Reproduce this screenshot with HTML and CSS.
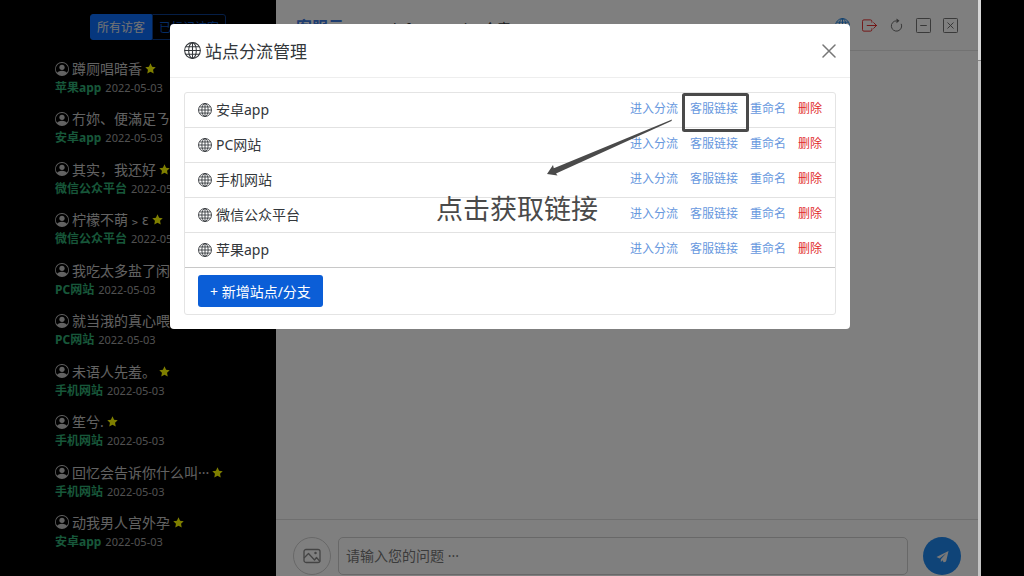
FILE: index.html
```html
<!DOCTYPE html>
<html lang="zh-CN">
<head>
    <meta charset="UTF-8">
    <meta name="viewport" content="width=device-width, initial-scale=1.0">
    <title>客服云</title>
    <link rel="stylesheet" href="styles.css">
</head>
<body>
    <svg class="sprite" aria-hidden="true">
        <symbol id="globe" viewBox="0 0 16 16">
            <g fill="none" stroke="currentColor">
                <circle cx="8" cy="8" r="7.4"/>
                <ellipse cx="8" cy="8" rx="3.6" ry="7.4"/>
                <path d="M8 .6v14.8M.6 8h14.8M1.7 4.5h12.6M1.7 11.5h12.6"/>
            </g>
        </symbol>
        <symbol id="person" viewBox="0 0 16 16">
            <path fill="currentColor" d="M11 6a3 3 0 1 1-6 0 3 3 0 0 1 6 0z"/>
            <path fill="currentColor" fill-rule="evenodd" d="M0 8a8 8 0 1 1 16 0A8 8 0 0 1 0 8zm8-7a7 7 0 0 0-5.468 11.37C3.242 11.226 4.805 10 8 10s4.757 1.225 5.468 2.37A7 7 0 0 0 8 1z"/>
        </symbol>
        <symbol id="star" viewBox="0 0 16 16">
            <path fill="currentColor" d="M8 .5l2.3 4.9 5.3.7-3.9 3.7 1 5.4L8 12.6l-4.7 2.6 1-5.4L.4 6.1l5.3-.7z"/>
        </symbol>
    </svg>

    <div class="page">
        <div class="window">
            <aside class="sidebar">
                <div class="tabs">
                    <button class="tab active">所有访客</button>
                    <button class="tab">已标记访客</button>
                </div>
                <ul class="visitors">
                    <li>
                        <div class="name"><svg class="avatar"><use href="#person"/></svg>蹲厕唱暗香<svg class="star"><use href="#star"/></svg></div>
                        <div class="from"><b>苹果app</b><span>2022-05-03</span></div>
                    </li>
                    <li>
                        <div class="name"><svg class="avatar"><use href="#person"/></svg>冇妳、便滿足ㄋ</div>
                        <div class="from"><b>安卓app</b><span>2022-05-03</span></div>
                    </li>
                    <li>
                        <div class="name"><svg class="avatar"><use href="#person"/></svg>其实，我还好<svg class="star"><use href="#star"/></svg></div>
                        <div class="from"><b>微信公众平台</b><span>2022-05-03</span></div>
                    </li>
                    <li>
                        <div class="name"><svg class="avatar"><use href="#person"/></svg>柠檬不萌﹥ε<svg class="star"><use href="#star"/></svg></div>
                        <div class="from"><b>微信公众平台</b><span>2022-05-03</span></div>
                    </li>
                    <li>
                        <div class="name"><svg class="avatar"><use href="#person"/></svg>我吃太多盐了闲的</div>
                        <div class="from"><b>PC网站</b><span>2022-05-03</span></div>
                    </li>
                    <li>
                        <div class="name"><svg class="avatar"><use href="#person"/></svg>就当涐的真心喂了</div>
                        <div class="from"><b>PC网站</b><span>2022-05-03</span></div>
                    </li>
                    <li>
                        <div class="name"><svg class="avatar"><use href="#person"/></svg>未语人先羞。<svg class="star"><use href="#star"/></svg></div>
                        <div class="from"><b>手机网站</b><span>2022-05-03</span></div>
                    </li>
                    <li>
                        <div class="name"><svg class="avatar"><use href="#person"/></svg>笙兮.<svg class="star"><use href="#star"/></svg></div>
                        <div class="from"><b>手机网站</b><span>2022-05-03</span></div>
                    </li>
                    <li>
                        <div class="name"><svg class="avatar"><use href="#person"/></svg>回忆会告诉你什么叫···<svg class="star"><use href="#star"/></svg></div>
                        <div class="from"><b>手机网站</b><span>2022-05-03</span></div>
                    </li>
                    <li>
                        <div class="name"><svg class="avatar"><use href="#person"/></svg>动我男人宫外孕<svg class="star"><use href="#star"/></svg></div>
                        <div class="from"><b>安卓app</b><span>2022-05-03</span></div>
                    </li>
                </ul>
            </aside>

            <main class="chat">
                <header class="topbar">
                    <strong class="brand">客服云</strong>
                    <span class="account">web for security 企章</span>
                    <div class="tools">
                        <button class="tool blue" aria-label="站点"><svg><use href="#globe"/></svg></button>
                        <button class="tool red" aria-label="退出">
                            <svg viewBox="0 0 16 16" fill="none" stroke="currentColor" stroke-linecap="round" stroke-linejoin="round"><path d="M10.5 4.500V3.500a1.500 1.500 0 0 0-1.500-1.500H2A1.500 1.500 0 0 0 .5 3.500v9A1.500 1.500 0 0 0 2 14h7a1.500 1.500 0 0 0 1.500-1.500v-1M5.500 8h10M12.500 5l3 3-3 3"/></svg>
                        </button>
                        <button class="tool" aria-label="刷新">
                            <svg viewBox="0 0 16 16"><path fill="none" stroke="currentColor" d="M8 3a5.500 5.500 0 1 0 5 3.200"/><path fill="currentColor" d="M8 .5v5l3.200-2.500z"/></svg>
                        </button>
                        <button class="tool" aria-label="最小化">
                            <svg viewBox="0 0 16 16" fill="none" stroke="currentColor"><rect x=".5" y=".5" width="15" height="15" rx="1"/><path d="M4.500 8h7"/></svg>
                        </button>
                        <button class="tool" aria-label="关闭窗口">
                            <svg viewBox="0 0 16 16" fill="none" stroke="currentColor"><rect x=".5" y=".5" width="15" height="15" rx="1"/><path d="M4.800 4.800l6.400 6.400M11.200 4.800l-6.400 6.400"/></svg>
                        </button>
                    </div>
                </header>
                <div class="messages"></div>
                <footer class="composer">
                    <button class="round" aria-label="图片">
                        <svg viewBox="0 0 18 16" fill="none" stroke="currentColor" stroke-width="1.3" stroke-linejoin="round"><rect x="1" y="1.500" width="16" height="13" rx="2"/><path d="M1 10l4.500-4.500 6 6.500 2-2.500 3.500 4"/><circle cx="12.500" cy="5" r=".6"/></svg>
                    </button>
                    <input class="message" type="text" aria-label="消息" placeholder="请输入您的问题 ···">
                    <button class="round send" aria-label="发送">
                        <svg viewBox="0 0 14 14" fill="currentColor"><path d="M13.500 1L.5 7.500l3.300 1.700L11 3.500 5.200 9.900v3.100l2-2 .9 2.300 1.900-.3 1-1.200z"/></svg>
                    </button>
                </footer>
            </main>

            <div class="overlay">
                <section class="modal" role="dialog" aria-labelledby="modal-title">
                    <div class="modal-header">
                        <svg class="title-icon"><use href="#globe"/></svg>
                        <h1 id="modal-title">站点分流管理</h1>
                        <button class="close" aria-label="关闭">
                            <svg viewBox="0 0 14 14" fill="none" stroke="currentColor" stroke-width="1.500" stroke-linecap="round"><path d="M1 1l12 12M13 1L1 13"/></svg>
                        </button>
                    </div>
                    <div class="modal-body">
                        <div class="card">
                            <table class="sites">
                                <tr>
                                    <td><div class="site"><svg><use href="#globe"/></svg>安卓app</div></td>
                                    <td class="links"><a href="#">进入分流</a><a href="#">客服链接</a><a href="#">重命名</a><a href="#" class="delete">删除</a></td>
                                </tr>
                                <tr>
                                    <td><div class="site"><svg><use href="#globe"/></svg>PC网站</div></td>
                                    <td class="links"><a href="#">进入分流</a><a href="#">客服链接</a><a href="#">重命名</a><a href="#" class="delete">删除</a></td>
                                </tr>
                                <tr>
                                    <td><div class="site"><svg><use href="#globe"/></svg>手机网站</div></td>
                                    <td class="links"><a href="#">进入分流</a><a href="#">客服链接</a><a href="#">重命名</a><a href="#" class="delete">删除</a></td>
                                </tr>
                                <tr>
                                    <td><div class="site"><svg><use href="#globe"/></svg>微信公众平台</div></td>
                                    <td class="links"><a href="#">进入分流</a><a href="#">客服链接</a><a href="#">重命名</a><a href="#" class="delete">删除</a></td>
                                </tr>
                                <tr>
                                    <td><div class="site"><svg><use href="#globe"/></svg>苹果app</div></td>
                                    <td class="links"><a href="#">进入分流</a><a href="#">客服链接</a><a href="#">重命名</a><a href="#" class="delete">删除</a></td>
                                </tr>
                            </table>
                            <div class="card-footer">
                                <button class="add">+ 新增站点/分支</button>
                            </div>
                        </div>
                    </div>
                    <!-- hint drawn over the table -->
                    <svg class="hint-arrow" viewBox="0 0 240 90">
                        <rect x="143.500" y="4.500" width="64" height="36" rx="1" fill="none" stroke="#4a4a4a" stroke-width="3"/>
                        <path fill="#4a4a4a" d="M132 29.500L131.500 31 16 83.500l1.500 2-10.500-1.500 6-9 .8 3.200z"/>
                    </svg>
                    <div class="hint">点击获取链接</div>
                </section>
            </div>
        </div>
        <div class="scrollbar"></div>
        <div class="gutter"></div>
    </div>
</body>
</html>
```
FILE: styles.css
```css
* {
    box-sizing: border-box;
}
body {
    margin: 0;
    background-color: #000;
    font-family: "Noto Sans", "Noto Sans CJK SC", sans-serif;
    font-size: 14px;
    color: #33373b;
}
button, input {
    font-family: inherit;
    margin: 0;
}
svg {
    display: block;
    flex-shrink: 0;
}
.sprite {
    position: absolute;
    width: 0;
    height: 0;
}
.page {
    display: flex;
    height: 100vh;
    overflow: hidden;
}
.window {
    position: relative;
    flex: 1;
    display: flex;
    min-width: 0;
}
.scrollbar {
    width: 3px;
    background: linear-gradient(#d8d8d8 0 60px, #888 60px 61px, #c4c4c4 61px);
}
.gutter {
    width: 43px;
    background-color: #000;
}

/* visitors */
.sidebar {
    width: 276px;
    padding: 14px 40px 26px 55px;
    background-color: #000;
    display: flex;
    flex-direction: column;
    gap: 18px;
}
.tabs {
    display: flex;
    padding-left: 35px;
}
.tab {
    height: 26px;
    padding: 0 6px;
    border: 1px solid #0a3c8c;
    border-radius: 0 3px 3px 0;
    background-color: transparent;
    color: #0a58ca;
    font-size: 12px;
    white-space: nowrap;
}
.tab.active {
    border-color: #0d6efd;
    border-radius: 3px 0 0 3px;
    background-color: #0d6efd;
    color: #e8e8e8;
}
.visitors {
    flex: 1;
    display: flex;
    flex-direction: column;
    justify-content: space-between;
    list-style: none;
    margin: 0;
    padding: 0;
    white-space: nowrap;
}
.name {
    display: flex;
    align-items: center;
    line-height: 21px;
    color: #c4c4c4;
}
.avatar {
    width: 14px;
    height: 14px;
    margin-right: 3px;
}
.star {
    width: 11px;
    height: 11px;
    margin-left: 3px;
    color: #ffff00;
}
.from {
    display: flex;
    gap: 4px;
    line-height: 17px;
    font-size: 12px;
    color: #2fae74;
}
.from span {
    font-size: 11px;
    color: #a0a0a0;
}

/* chat */
.chat {
    flex: 1;
    display: flex;
    flex-direction: column;
    min-width: 0;
    background-color: #fff;
}
.topbar {
    display: flex;
    align-items: center;
    height: 51px;
    padding: 0 20px;
    border-bottom: 1px solid #e4e4e4;
}
.brand {
    padding-top: 2px;
    font-size: 16px;
    color: #3f7be0;
}
.account {
    margin-left: 30px;
    padding-top: 6px;
}
.tools {
    display: flex;
    gap: 12px;
    margin-left: auto;
}
.tool {
    padding: 0;
    border: 0;
    background: none;
    color: #666;
}
.tool svg {
    width: 15px;
    height: 15px;
}
.tool.blue {
    color: #1e80dd;
}
.tool.red {
    color: #e52222;
}
.messages {
    flex: 1;
}
.composer {
    display: flex;
    align-items: center;
    height: 57px;
    padding: 16px 17px 0;
    border-top: 1px solid #dedede;
}
.round {
    display: flex;
    align-items: center;
    justify-content: center;
    flex-shrink: 0;
    width: 38px;
    height: 38px;
    padding: 0;
    border: 1px solid #d0d0d0;
    border-radius: 50%;
    background: none;
    color: #888;
}
.round svg {
    width: 18px;
    height: 16px;
}
.message {
    flex: 1;
    min-width: 0;
    height: 38px;
    margin: 0 15px 0 7px;
    padding: 0 7px 2px;
    border: 1px solid #d0d0d0;
    border-radius: 5px;
    background: none;
    font-size: 14px;
}
.message::placeholder {
    color: #777;
}
.round.send {
    border: 0;
    background-color: #1e88f0;
    color: #f0f0f0;
}
.round.send svg {
    width: 13px;
    height: 13px;
}

/* modal */
.overlay {
    position: absolute;
    inset: 0;
    display: flex;
    justify-content: center;
    align-items: flex-start;
    padding: 24px 0 0 42px;
    background-color: rgba(0, 0, 0, 0.5);
}
.modal {
    position: relative;
    width: 100%;
    max-width: 680px;
    background-color: #fff;
    border-radius: 4px;
}
.modal-header {
    display: flex;
    align-items: center;
    height: 54px;
    padding: 0 14px;
    border-bottom: 1px solid #eee;
}
.modal-header h1 {
    margin: 0 0 0 4px;
    font-size: 17px;
    font-weight: 400;
}
.title-icon {
    width: 17px;
    height: 17px;
}
.close {
    margin-left: auto;
    padding: 0;
    border: 0;
    background: none;
    color: #777;
}
.close svg {
    width: 14px;
    height: 14px;
}
.modal-body {
    padding: 14px;
}
.card {
    border: 1px solid #e4e4e4;
    border-radius: 3px;
}
.sites {
    width: 100%;
    border-spacing: 0;
}
.sites td {
    height: 35px;
    padding: 0 13px;
    border-bottom: 1px solid #e2e2e2;
}
.sites tr:last-child td {
    border-bottom-color: #c8c8c8;
}
.site {
    display: flex;
    align-items: center;
    gap: 4px;
    line-height: 20px;
}
.site svg {
    width: 14px;
    height: 14px;
}
.sites .links {
    padding-top: 7px;
    line-height: 18px;
    vertical-align: top;
    text-align: right;
    white-space: nowrap;
    font-size: 12px;
}
.links a {
    margin-left: 12px;
    color: #6798de;
    text-decoration: none;
}
.links .delete {
    color: #df2b2b;
}
.card-footer {
    padding: 7px 13px;
}
.add {
    display: block;
    height: 32px;
    padding: 0 12px;
    border: 0;
    border-radius: 3px;
    background-color: #0b5ed7;
    color: #fff;
    font-size: 14px;
}
.hint-arrow {
    position: absolute;
    top: 66px;
    right: 70px;
    width: 240px;
    height: 90px;
    pointer-events: none;
}
.hint {
    position: absolute;
    top: 165px;
    right: 252px;
    line-height: 40px;
    font-size: 27px;
    color: #4a4a4a;
    pointer-events: none;
}
```
